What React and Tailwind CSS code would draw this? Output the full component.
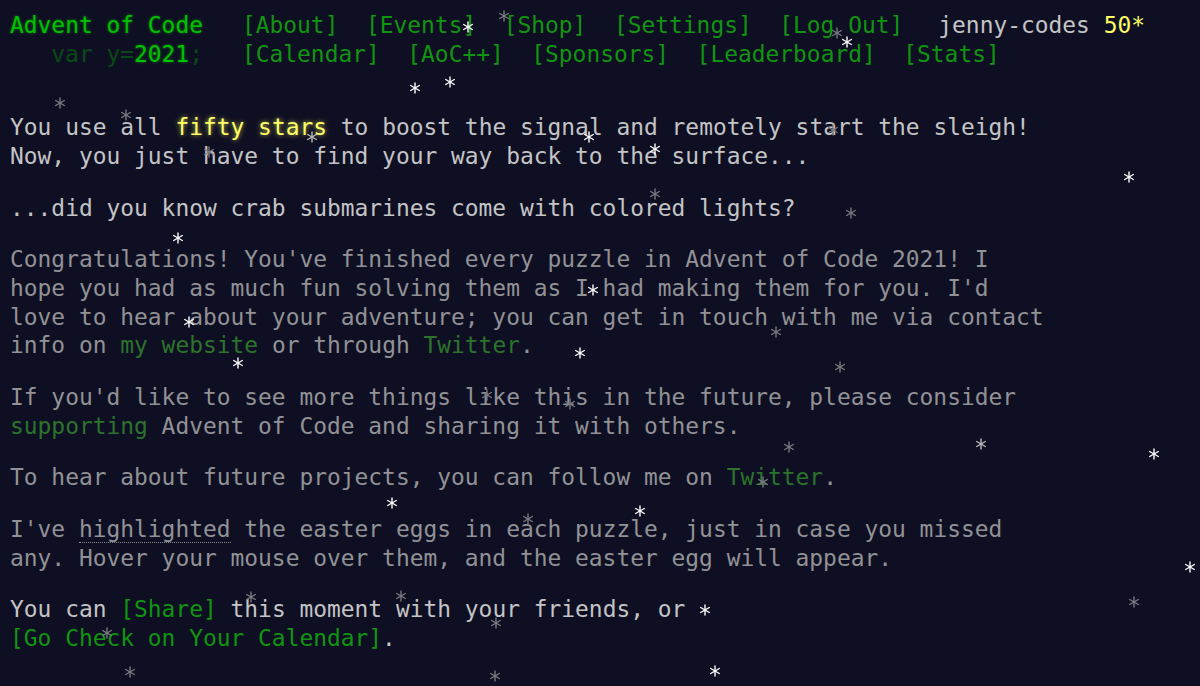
import React from "react";

const stars = [
  [468, 27, "w"], [504, 16, "g"], [837, 33, "g"], [847, 42, "w"],
  [415, 88, "w"], [450, 82, "w"], [60, 103, "g"], [126, 115, "g"],
  [312, 137, "l"], [589, 137, "w"], [209, 152, "g"], [655, 149, "w"],
  [833, 130, "g"], [1129, 177, "w"], [655, 194, "g"], [851, 213, "g"],
  [178, 238, "w"], [593, 290, "w"], [189, 322, "w"], [776, 332, "g"],
  [580, 353, "w"], [238, 363, "w"], [840, 367, "g"], [487, 395, "g"],
  [570, 404, "g"], [789, 447, "g"], [981, 444, "l"], [1154, 454, "w"],
  [763, 482, "g"], [392, 503, "w"], [640, 511, "w"], [528, 519, "g"],
  [1190, 567, "w"], [251, 597, "g"], [401, 596, "g"], [705, 610, "w"],
  [1134, 602, "g"], [496, 623, "g"], [107, 633, "g"], [130, 672, "g"],
  [495, 676, "g"], [715, 671, "w"],
];

const starColor = { w: "#ffffff", l: "#bbbbbb", g: "#7a7a80" };

const Star = ({ x, y, c }) => (
  <svg
    width="12"
    height="12"
    viewBox="0 0 12 12"
    className="absolute pointer-events-none"
    style={{ left: x - 6, top: y - 6 }}
  >
    <g stroke={starColor[c]} strokeWidth="1.4" strokeLinecap="round">
      <line x1="6" y1="1" x2="6" y2="11" />
      <line x1="1.7" y1="3.5" x2="10.3" y2="8.5" />
      <line x1="1.7" y1="8.5" x2="10.3" y2="3.5" />
    </g>
  </svg>
);

const Link = ({ children, dim }) => (
  <a href="#" className={dim ? "text-[#2c732c]" : "text-[#119411]"}>
    {children}
  </a>
);

const App = () => {
  const topNav = ["[About]", "[Events]", "[Shop]", "[Settings]", "[Log Out]"];
  const bottomNav = ["[Calendar]", "[AoC++]", "[Sponsors]", "[Leaderboard]", "[Stats]"];

  return (
    <div className="relative min-h-screen overflow-hidden bg-[#0f0f23] text-[#c4c4c6] font-['DejaVu_Sans_Mono',monospace] text-[22.9px] leading-[28.7px] whitespace-pre">
      {/* header */}
      <header className="flex pt-[11px] pl-[10px]">
        <div className="mr-[39px]">
          <div className="text-[#00c000] [text-shadow:0_0_3px_rgba(0,204,0,0.6)]">
            Advent of Code
          </div>
          <div className="text-right text-[#00c000]">
            <span className="opacity-[0.33]">var y=</span>
            <span className="[text-shadow:0_0_3px_rgba(0,204,0,0.6)]">2021</span>
            <span className="opacity-[0.33]">;</span>
          </div>
        </div>
        <div>
          <div className="flex">
            <nav className="flex gap-[27.5px]">
              {topNav.map((item) => (
                <Link key={item}>{item}</Link>
              ))}
            </nav>
            <div className="ml-[35px]">
              jenny-codes <span className="text-[#ffff66]">50*</span>
            </div>
          </div>
          <nav className="flex gap-[27.5px]">
            {bottomNav.map((item) => (
              <Link key={item}>{item}</Link>
            ))}
          </nav>
        </div>
      </header>

      {/* article */}
      <main className="pl-[10px] mt-[45px] flex flex-col gap-[22.9px]">
        <p>
          You use all{" "}
          <span className="text-[#ffff66] [text-shadow:0_0_5px_rgba(255,255,102,0.7)]">fifty stars</span>{" "}
          to boost the signal and remotely start the sleigh!
          <br />
          Now, you just have to find your way back to the surface...
        </p>
        <p>...did you know crab submarines come with colored lights?</p>
        <p className="text-[#929296]">
          Congratulations! You've finished every puzzle in Advent of Code 2021! I
          <br />
          hope you had as much fun solving them as I had making them for you. I'd
          <br />
          love to hear about your adventure; you can get in touch with me via contact
          <br />
          info on <Link dim>my website</Link> or through <Link dim>Twitter</Link>.
        </p>
        <p className="text-[#929296]">
          If you'd like to see more things like this in the future, please consider
          <br />
          <Link dim>supporting</Link> Advent of Code and sharing it with others.
        </p>
        <p className="text-[#929296]">
          To hear about future projects, you can follow me on <Link dim>Twitter</Link>.
        </p>
        <p className="text-[#929296]">
          I've <span className="border-b border-dotted border-[#8a8a8a]">highlighted</span> the
          easter eggs in each puzzle, just in case you missed
          <br />
          any. Hover your mouse over them, and the easter egg will appear.
        </p>
        <p>
          You can <Link>[Share]</Link> this moment with your friends, or
          <br />
          <Link>[Go Check on Your Calendar]</Link>.
        </p>
      </main>

      {stars.map(([x, y, c], i) => (
        <Star key={i} x={x} y={y} c={c} />
      ))}
    </div>
  );
};

export default App;
